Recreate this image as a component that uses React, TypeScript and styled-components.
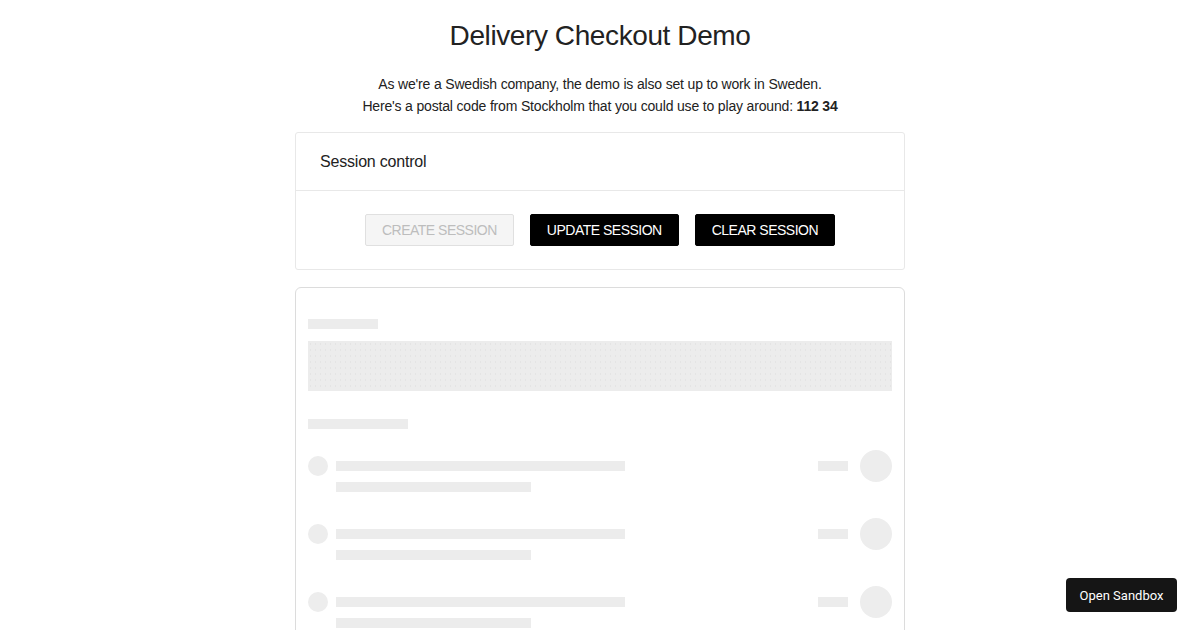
import React from "react";
import styled, { createGlobalStyle } from "styled-components";

const Global = createGlobalStyle`
  html, body { margin: 0; padding: 0; background: #fff; }
  body { font-family: "Liberation Sans", Arial, sans-serif; color: #333; }
  * { box-sizing: border-box; }
`;

const Page = styled.main`
  width: 610px;
  margin: 0 auto;
  padding-top: 18px;
`;

const Title = styled.h1`
  margin: 0;
  text-align: center;
  font-size: 28px;
  font-weight: 400;
  line-height: 36px;
  letter-spacing: -0.4px;
  color: #222;
`;

const Intro = styled.p`
  margin: 19px 0 15px;
  text-align: center;
  font-size: 14px;
  line-height: 22px;
  letter-spacing: -0.17px;
  color: #222;
  white-space: nowrap;
  b { font-weight: 700; }
`;

const Card = styled.section<{ $radius: number; $border: string }>`
  background: #fff;
  border: 1px solid ${(p) => p.$border};
  border-radius: ${(p) => p.$radius}px;
  margin-bottom: 17px;
  overflow: hidden;
`;

const CardHeader = styled.header`
  height: 58px;
  display: flex;
  align-items: center;
  padding: 0 24px;
  font-size: 16px;
  letter-spacing: -0.2px;
  color: #222;
  border-bottom: 1px solid #e8e8e8;
`;

const CardBody = styled.div`
  height: 78px;
  display: flex;
  align-items: center;
  justify-content: center;
  gap: 16px;
`;

const Button = styled.button<{ $disabled?: boolean }>`
  height: 32px;
  padding: 0 16px;
  font-family: "Liberation Sans", Arial, sans-serif;
  font-size: 14px;
  letter-spacing: -0.5px;
  text-transform: uppercase;
  border-radius: 2px;
  cursor: pointer;
  border: 1px solid ${(p) => (p.$disabled ? "#e0e0e0" : "#000")};
  background: ${(p) => (p.$disabled ? "#f5f5f5" : "#000")};
  color: ${(p) => (p.$disabled ? "#bdbdbd" : "#fff")};
`;

const Skeleton = styled.div`
  padding: 31px 12px 0;
  height: 360px;
`;

const Bar = styled.div<{ $w: string; $h?: number; $mt?: number }>`
  width: ${(p) => p.$w};
  height: ${(p) => p.$h ?? 10}px;
  margin-top: ${(p) => p.$mt ?? 0}px;
  background-color: #ececec;
  flex-shrink: 0;
`;

const Block = styled.div`
  margin-top: 12px;
  height: 50px;
  background-color: #ececec;
  background-image: radial-gradient(circle, #e4e4e4 0.5px, transparent 0.8px);
  background-size: 5px 6px;
`;

const Circle = styled.div<{ $d: number; $mt?: number }>`
  width: ${(p) => p.$d}px;
  height: ${(p) => p.$d}px;
  border-radius: 50%;
  background: #ededed;
  margin-top: ${(p) => p.$mt ?? 0}px;
  flex-shrink: 0;
`;

const Rows = styled.div`
  margin-top: 21px;
  display: flex;
  flex-direction: column;
  gap: 26px;
`;

const Row = styled.div`
  display: flex;
  align-items: flex-start;
`;

const Lines = styled.div`
  margin-left: 8px;
  padding-top: 11px;
  display: flex;
  flex-direction: column;
  gap: 11px;
  flex: 1;
`;

const Trailing = styled.div`
  display: flex;
  align-items: flex-start;
  gap: 12px;
`;

const SandboxButton = styled.button`
  position: fixed;
  right: 23px;
  bottom: 18px;
  width: 111px;
  height: 34px;
  background: #151515;
  color: #fff;
  border: none;
  border-radius: 4px;
  font-family: Roboto, "Liberation Sans", sans-serif;
  font-size: 13px;
  cursor: pointer;
`;

export default function App() {
  return (
    <>
      <Global />
      <Page>
        <Title>Delivery Checkout Demo</Title>
        <Intro>
          As we're a Swedish company, the demo is also set up to work in Sweden.
          <br />
          Here's a postal code from Stockholm that you could use to play around: <b>112 34</b>
        </Intro>
        <Card $radius={3} $border="#e8e8e8">
          <CardHeader>Session control</CardHeader>
          <CardBody>
            <Button $disabled>Create session</Button>
            <Button>Update session</Button>
            <Button>Clear session</Button>
          </CardBody>
        </Card>
        <Card $radius={6} $border="#dcdcdc">
          <Skeleton>
            <Bar $w="70px" />
            <Block />
            <Bar $w="100px" $mt={28} />
            <Rows>
              {[0, 1, 2].map((i) => (
                <Row key={i}>
                  <Circle $d={20} $mt={6} />
                  <Lines>
                    <Bar $w="289px" />
                    <Bar $w="195px" />
                  </Lines>
                  <Trailing>
                    <Bar $w="30px" $mt={11} />
                    <Circle $d={32} />
                  </Trailing>
                </Row>
              ))}
            </Rows>
          </Skeleton>
        </Card>
      </Page>
      <SandboxButton>Open Sandbox</SandboxButton>
    </>
  );
}
